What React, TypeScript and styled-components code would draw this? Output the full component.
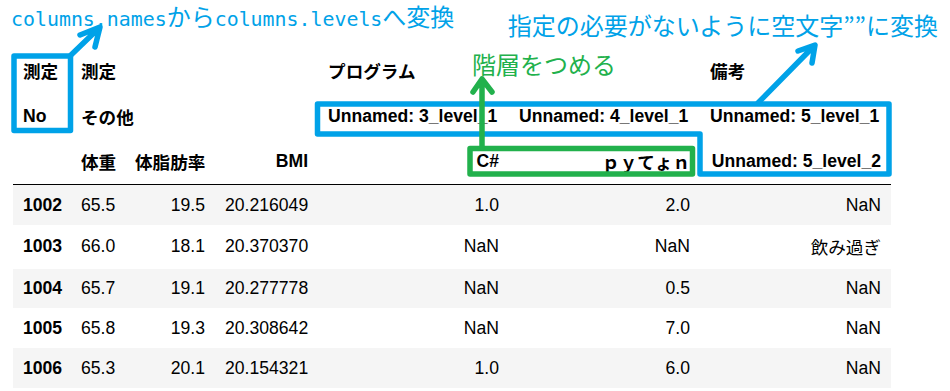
import React from "react";
import styled, { createGlobalStyle } from "styled-components";

const BLUE = "#00a2e8";
const GREEN = "#22b14c";

interface headCell {
  text: string;
  span?: number;
}

// 列の幅（インデックス列を含む）
const colWidths = [58, 54, 90, 103, 191, 191, 191];

const headerRows: headCell[][] = [
  [{ text: "測定" }, { text: "測定", span: 3 }, { text: "プログラム", span: 2 }, { text: "備考" }],
  [
    { text: "No" },
    { text: "その他", span: 3 },
    { text: "Unnamed: 3_level_1" },
    { text: "Unnamed: 4_level_1" },
    { text: "Unnamed: 5_level_1" },
  ],
  [
    { text: "" },
    { text: "体重" },
    { text: "体脂肪率" },
    { text: "BMI" },
    { text: "C#" },
    { text: "ｐｙてょｎ" },
    { text: "Unnamed: 5_level_2" },
  ],
];

const rows = [
  ["1002", "65.5", "19.5", "20.216049", "1.0", "2.0", "NaN"],
  ["1003", "66.0", "18.1", "20.370370", "NaN", "NaN", "飲み過ぎ"],
  ["1004", "65.7", "19.1", "20.277778", "NaN", "0.5", "NaN"],
  ["1005", "65.8", "19.3", "20.308642", "NaN", "7.0", "NaN"],
  ["1006", "65.3", "20.1", "20.154321", "1.0", "6.0", "NaN"],
];

function App() {
  return (
    <Page>
      <GlobalStyle />
      <Notes>
        <Note color={BLUE} $offset={-2}>
          <Latin>columns.names</Latin>
          <span>から</span>
          <Latin>columns.levels</Latin>
          <span>へ変換</span>
        </Note>
        <Note color={BLUE} $offset={7}>
          指定の必要がないように空文字””に変換
        </Note>
      </Notes>

      <Table>
        <colgroup>
          {colWidths.map((w, i) => (
            <col key={i} style={{ width: w }} />
          ))}
        </colgroup>
        <thead>
          {headerRows.map((row, r) => (
            <tr key={r}>
              {row.map((cell, c) => (
                <HeadCell
                  key={c}
                  colSpan={cell.span}
                  $align={r < 2 || c === 0 ? "left" : "right"}
                  $last={r === headerRows.length - 1}
                >
                  {cell.text}
                </HeadCell>
              ))}
            </tr>
          ))}
        </thead>
        <tbody>
          {rows.map((row, r) => (
            <BodyRow key={r} $striped={r % 2 === 0}>
              <IndexCell>{row[0]}</IndexCell>
              {row.slice(1).map((v, c) => (
                <Cell key={c}>{v}</Cell>
              ))}
            </BodyRow>
          ))}
        </tbody>
      </Table>

      <StepNote>階層をつめる</StepNote>

      <Overlay width="950" height="391" viewBox="0 0 950 391">
        <g fill="none" stroke={BLUE} strokeWidth="5.5" strokeLinejoin="round" strokeLinecap="round">
          <rect x="14" y="56" width="56.5" height="74.5" />
          <path d="M71 55 L99 28 M80 35 L100 27 L95 47" />
          <path d="M317.5 104 H889 V174 H700 V134 H317.5 Z" />
          <path d="M758 103 L814 46 M798 51 L815 45 L812 63" />
        </g>
        <g fill="none" stroke={GREEN} strokeWidth="5.5" strokeLinejoin="round" strokeLinecap="round">
          <rect x="470" y="148.5" width="222.5" height="25.5" />
          <path d="M482 148 V80 M473 92 L482 79 L492 92" />
        </g>
      </Overlay>
    </Page>
  );
}

export default App;

const GlobalStyle = createGlobalStyle`
  body {
    margin: 0;
    background: #fff;
  }
`;

const Page = styled.div`
  position: relative;
  width: 950px;
  height: 391px;
  overflow: hidden;
  font-family: "Liberation Sans", "Noto Sans CJK JP", sans-serif;
  color: #000;
`;

const Notes = styled.div`
  display: flex;
  justify-content: space-between;
  align-items: flex-start;
  height: 48px;
  padding: 0 12px 0 11px;
  box-sizing: border-box;
`;

const Note = styled.div<{ color: string; $offset?: number }>`
  flex-shrink: 0;
  margin-top: ${(props) => props.$offset || 0}px;
  font-family: "Noto Sans CJK JP", sans-serif;
  font-size: 24px;
  line-height: normal;
  color: ${(props) => props.color};
  white-space: nowrap;
`;

const Latin = styled.span`
  font-family: "DejaVu Sans Mono", "Liberation Mono", monospace;
  font-size: 19.9px;
`;

const StepNote = styled.div`
  position: absolute;
  left: 472px;
  top: 46px;
  font-family: "Noto Sans CJK JP", sans-serif;
  font-size: 24px;
  line-height: normal;
  color: ${GREEN};
`;

const Table = styled.table`
  margin-left: 13px;
  width: 878px;
  table-layout: fixed;
  border-collapse: collapse;
  border-spacing: 0;
  font-size: 17.6px;
`;

const HeadCell = styled.th<{ $align: string; $last: boolean }>`
  padding: 10.2px 10px;
  font-weight: bold;
  text-align: ${(props) => props.$align};
  white-space: nowrap;
  vertical-align: middle;
  border-bottom: ${(props) => (props.$last ? "1px solid #000" : "none")};
`;

const BodyRow = styled.tr<{ $striped: boolean }>`
  background: ${(props) => (props.$striped ? "#f5f5f5" : "#fff")};
`;

const IndexCell = styled.th`
  padding: 9.4px 10px;
  font-weight: bold;
  text-align: left;
  white-space: nowrap;
`;

const Cell = styled.td`
  padding: 9.4px 10px;
  text-align: right;
  white-space: nowrap;
`;

const Overlay = styled.svg`
  position: absolute;
  left: 0;
  top: 0;
  pointer-events: none;
`;
